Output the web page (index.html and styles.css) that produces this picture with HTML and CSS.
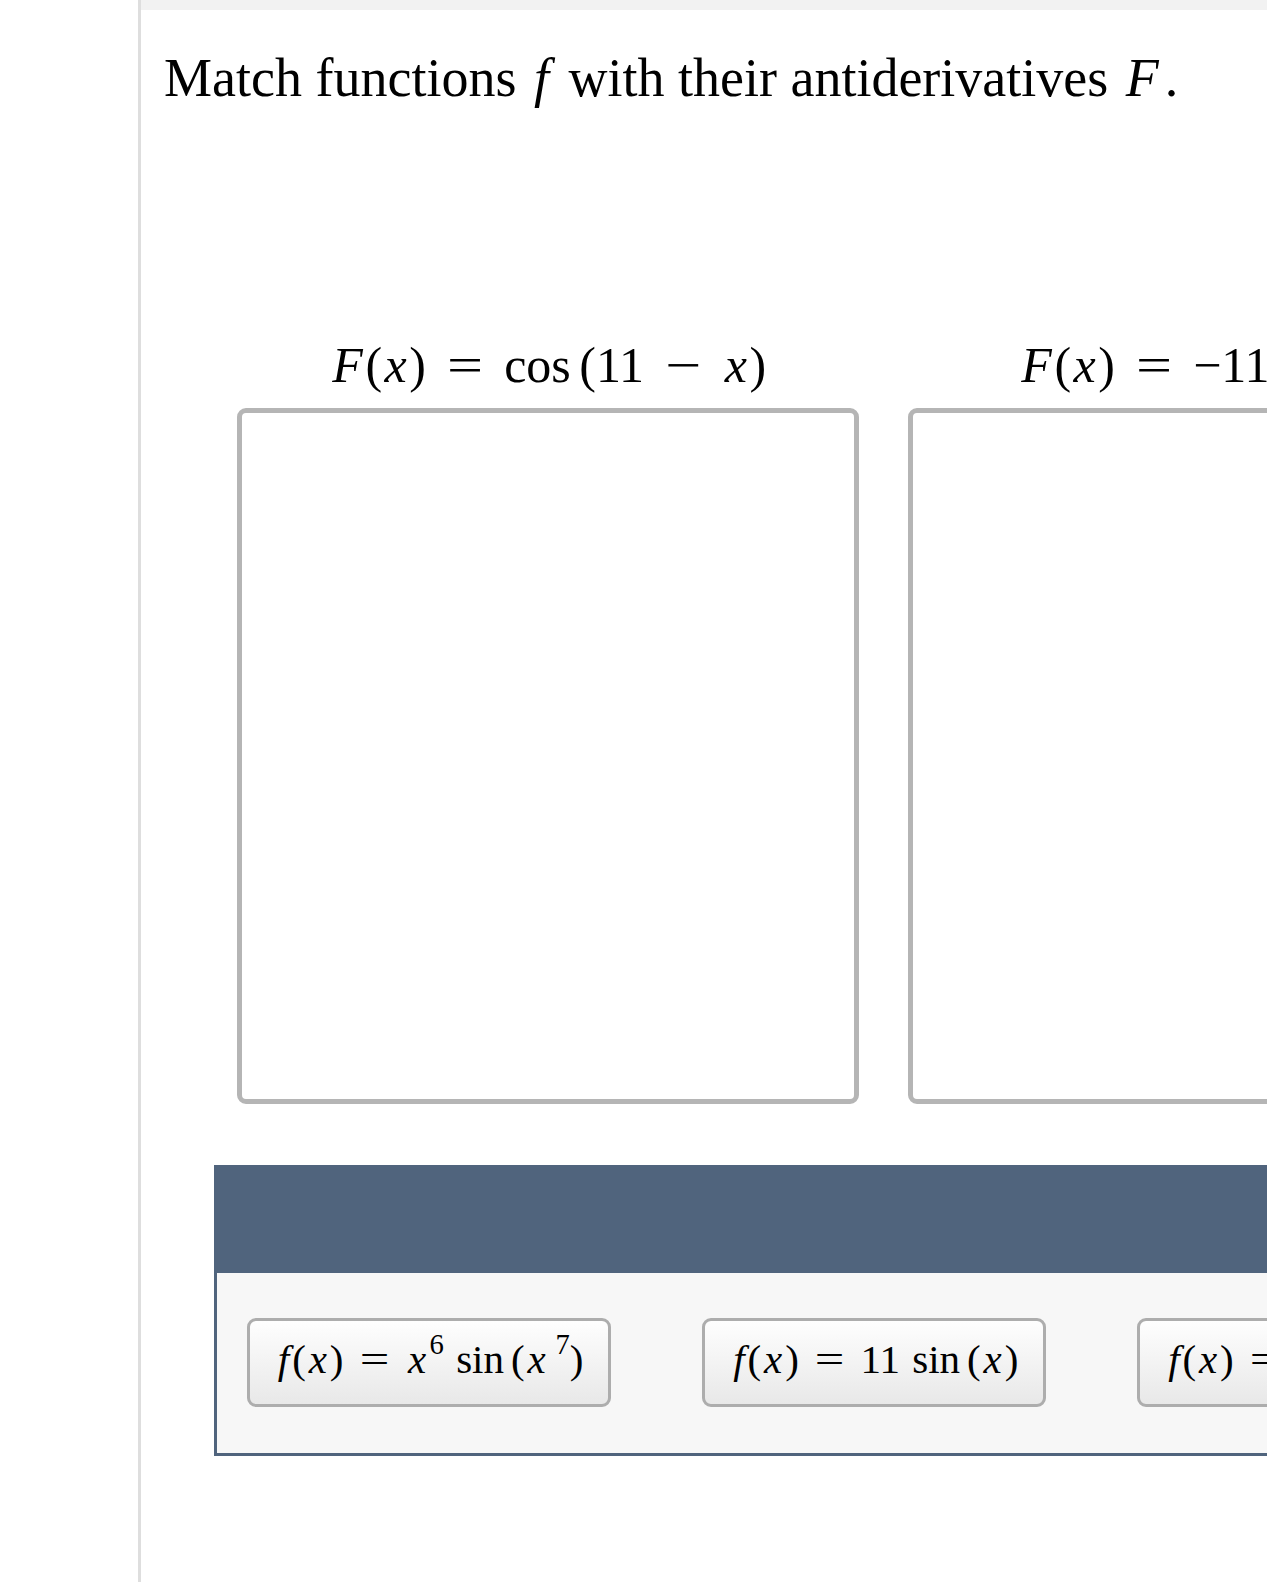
FILE: index.html
```html
<!DOCTYPE html>
<html>
<head>
  <title>Match functions</title>
  <link rel="stylesheet" href="styles.css">
</head>
<body>
  <div class="page">
    <div class="topbar"></div>
    <div class="content">
      <p class="prompt">Match functions <i class="var">f</i> with their antiderivatives <i class="var">F</i>.</p>

      <!-- drop targets, one per antiderivative -->
      <div class="targets">
        <div class="target">
          <div class="target-label math"><i>F</i>(<i>x</i>)<span class="op">=</span>cos<span class="thin"></span>(11<span class="op">&minus;</span><i>x</i>)</div>
          <div class="drop"></div>
        </div>
        <div class="target">
          <div class="target-label math"><i>F</i>(<i>x</i>)<span class="op">=</span>&minus;11<span class="wide"></span>cos<span class="thin"></span>(<i>x</i>)</div>
          <div class="drop"></div>
        </div>
      </div>

      <!-- bank of draggable functions -->
      <div class="bank">
        <div class="bank-head"></div>
        <div class="bank-body">
          <button class="chip math"><i>f</i>(<i>x</i>)<span class="op">=</span><i>x</i><sup>6</sup><span class="wide"></span>sin<span class="thin"></span>(<i>x</i><sup class="loose">7</sup>)</button>
          <button class="chip math"><i>f</i>(<i>x</i>)<span class="op">=</span>11<span class="wide"></span>sin<span class="thin"></span>(<i>x</i>)</button>
          <button class="chip math"><i>f</i>(<i>x</i>)<span class="op">=</span>sin<span class="thin"></span>(11<span class="op">&minus;</span><i>x</i>)</button>
        </div>
      </div>
    </div>
  </div>
</body>
</html>
```

FILE: styles.css
```css
html, body {
  margin: 0;
  background: #fff;
  overflow: hidden;
}
body {
  font-family: "Liberation Serif", "Times New Roman", serif;
  color: #000;
}
.page {
  margin-left: 138px;
  border-left: 3px solid #dedede;
  min-height: 100vh;
}
.topbar {
  height: 10px;
  background: #f2f2f2;
}
.content {
  padding-left: 23px;
}
.prompt {
  margin: 36px 0 0;
  font-size: 54px;
  line-height: 64px;
  white-space: nowrap;
}
.prompt .var {
  margin: 0 6px 0 4px;
}
.math i {
  font-style: italic;
  padding: 0 0.05em;
}
.math .op {
  display: inline-block;
  margin: 0 0.42em;
  transform: scaleX(1.28);
}
.target-label .op {
  margin: 0 0.5em;
}
.math .thin {
  display: inline-block;
  width: 0.17em;
}
.math .wide {
  display: inline-block;
  width: 0.28em;
}
.math sup {
  font-size: 0.7em;
  line-height: 0;
  vertical-align: 0.64em;
  margin-left: 0.02em;
}
.math sup.loose {
  margin-left: 0.24em;
}
.targets {
  display: flex;
  gap: 49px;
  margin: 227px 0 0 73px;
}
.target {
  flex: 0 0 622px;
}
.target-label {
  font-size: 50px;
  line-height: 56px;
  text-align: center;
  white-space: nowrap;
  margin-bottom: 15px;
}
.drop {
  height: 696px;
  box-sizing: border-box;
  border: 5px solid #b5b5b5;
  border-radius: 9px;
  background: #fff;
}
.bank {
  width: 1400px;
  margin: 61px 0 0 50px;
}
.bank-head {
  height: 108px;
  background: #50647d;
}
.bank-body {
  display: flex;
  gap: 91px;
  padding: 45px 30px 46px;
  background: #f7f7f7;
  border-left: 3px solid #50647d;
  border-bottom: 3px solid #50647d;
}
.chip {
  flex: 0 0 auto;
  height: 89px;
  box-sizing: border-box;
  padding: 0 25px 8px;
  font-family: inherit;
  font-size: 41px;
  color: #000;
  white-space: nowrap;
  border: 3px solid #adadad;
  border-radius: 9px;
  background: linear-gradient(#fefefe, #e8e8e8);
  cursor: pointer;
}
.chip i {
  padding: 0 0.07em;
}
.chip .op {
  margin: 0 0.47em;
}
.chip .wide {
  width: 0.3em;
}
```
